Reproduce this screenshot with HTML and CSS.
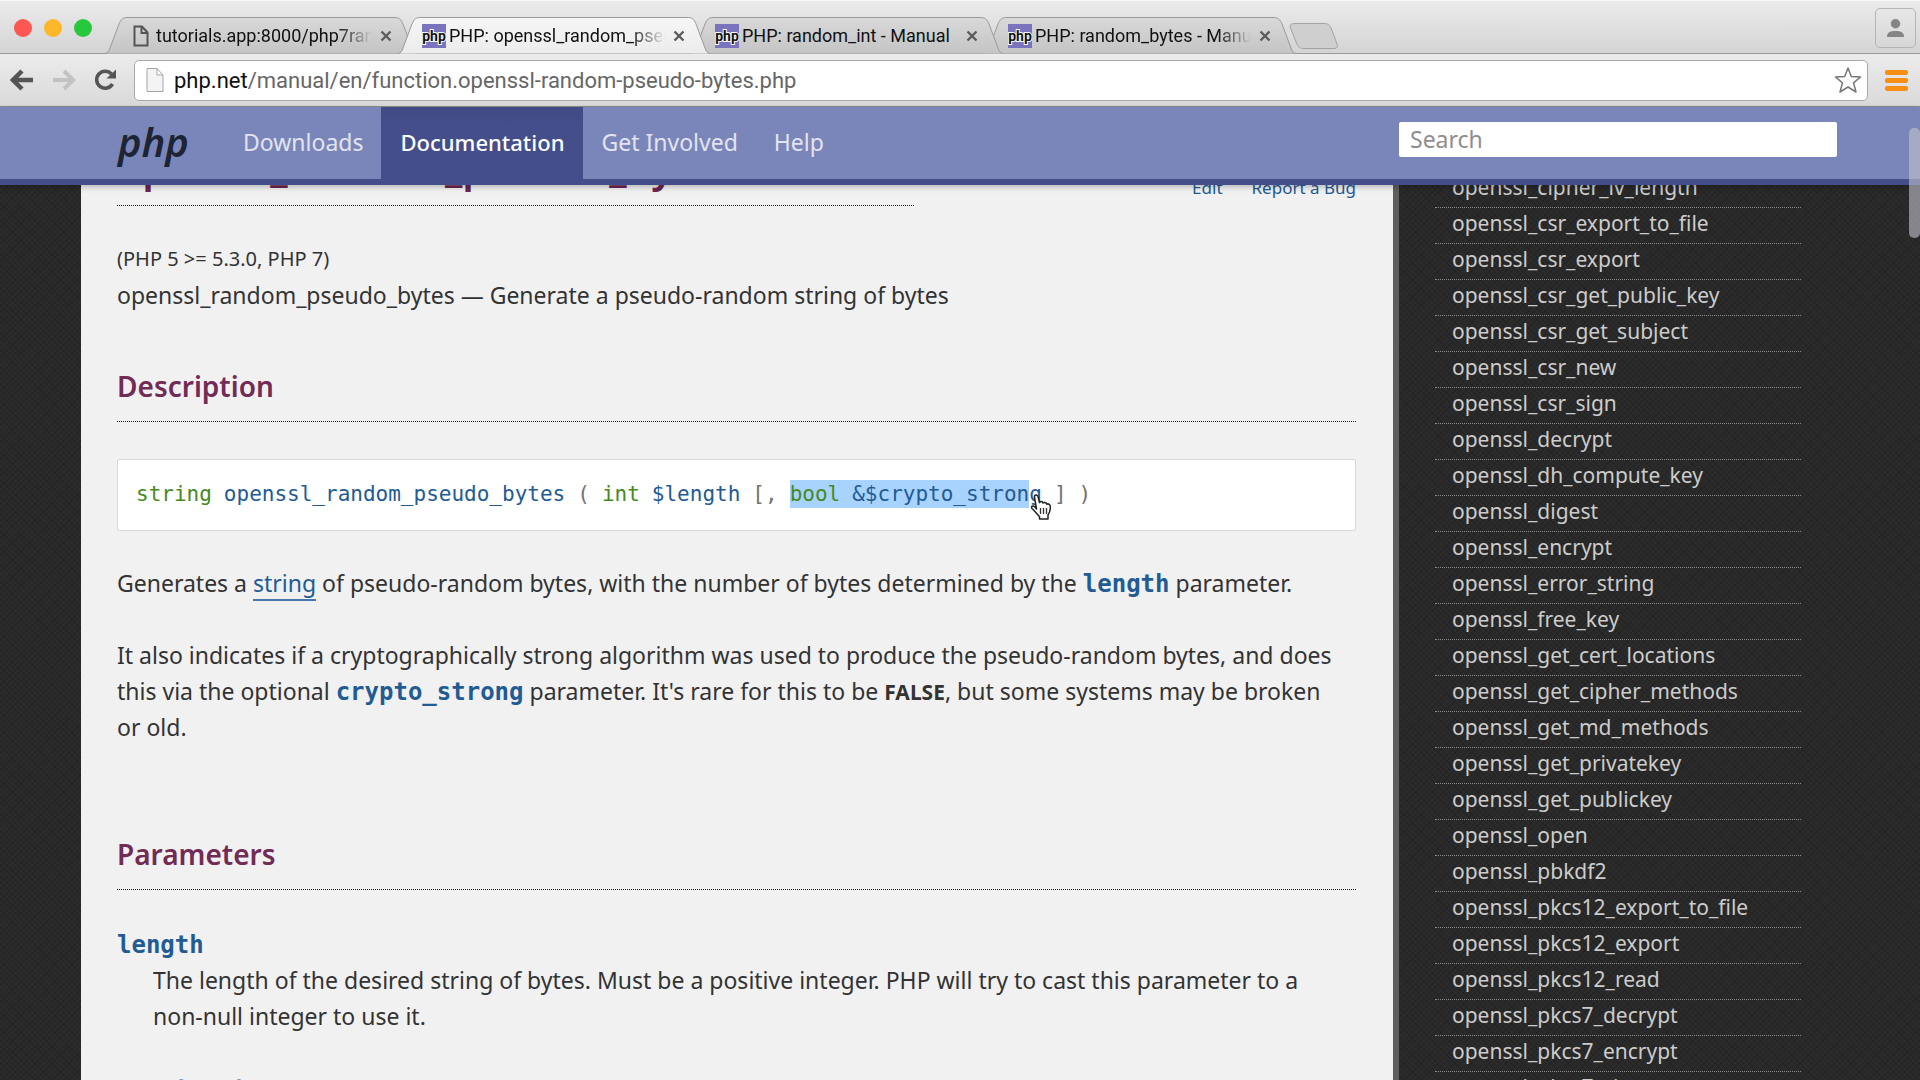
FILE: index.html
```html
<!DOCTYPE html>
<html lang="en">
<head>
    <meta charset="UTF-8">
    <meta name="viewport" content="width=device-width, initial-scale=1.0">
    <title>PHP: openssl_random_pseudo_bytes - Manual</title>
    <link rel="stylesheet" href="styles.css">
</head>
<body>
    <!-- Shared shapes -->
    <svg class="defs" width="0" height="0" aria-hidden="true">
        <defs>
            <linearGradient id="tab-fill" x1="0" y1="0" x2="0" y2="1">
                <stop offset="0" stop-color="#d9d9d9"/>
                <stop offset="1" stop-color="#c4c4c4"/>
            </linearGradient>
            <linearGradient id="tab-fill-active" x1="0" y1="0" x2="0" y2="1">
                <stop offset="0" stop-color="#f6f6f6"/>
                <stop offset="1" stop-color="#ececec"/>
            </linearGradient>
            <symbol id="tab-shape" viewBox="0 0 312 37">
                <path d="M0 36.5 C3 36 4 34 5 31 L14 7 C16 2 18 .5 23 .5 H289 C294 .5 296 2 298 7 L307 31 C308 34 309 36 312 36.5" stroke="#9a9a9a"/>
            </symbol>
            <symbol id="favicon" viewBox="0 0 24 24">
                <rect width="24" height="24" fill="#7a73bd"/>
                <text x="12" y="17" class="favicon-text">php</text>
            </symbol>
            <symbol id="close" viewBox="0 0 12 12">
                <path d="M1.5 1.5 L10.5 10.5 M10.5 1.5 L1.5 10.5" stroke="#5c5c5c" stroke-width="2.4"/>
            </symbol>
        </defs>
    </svg>

    <div class="browser">
        <div class="tab-strip">
            <div class="lights">
                <span class="light red"></span>
                <span class="light yellow"></span>
                <span class="light green"></span>
            </div>
            <div class="tabs">
                <div class="tab">
                    <svg class="tab-bg"><use href="#tab-shape"/></svg>
                    <svg class="tab-icon" viewBox="0 0 24 24"><path d="M5.500 2.500 H13 L18.500 8.500 V21.500 H5.500 Z M12.500 2.500 V9 H18.500" fill="none" stroke="#555" stroke-width="2"/></svg>
                    <span class="tab-title fade">tutorials.app:8000/php7random</span>
                    <button class="tab-close" aria-label="Close tab"><svg><use href="#close"/></svg></button>
                </div>
                <div class="tab active">
                    <svg class="tab-bg"><use href="#tab-shape"/></svg>
                    <svg class="tab-icon"><use href="#favicon"/></svg>
                    <span class="tab-title fade">PHP: openssl_random_pseudo_bytes</span>
                    <button class="tab-close" aria-label="Close tab"><svg><use href="#close"/></svg></button>
                </div>
                <div class="tab">
                    <svg class="tab-bg"><use href="#tab-shape"/></svg>
                    <svg class="tab-icon"><use href="#favicon"/></svg>
                    <span class="tab-title">PHP: random_int - Manual</span>
                    <button class="tab-close" aria-label="Close tab"><svg><use href="#close"/></svg></button>
                </div>
                <div class="tab">
                    <svg class="tab-bg"><use href="#tab-shape"/></svg>
                    <svg class="tab-icon"><use href="#favicon"/></svg>
                    <span class="tab-title fade">PHP: random_bytes - Manual</span>
                    <button class="tab-close" aria-label="Close tab"><svg><use href="#close"/></svg></button>
                </div>
            </div>
            <button class="new-tab" aria-label="New tab">
                <svg viewBox="0 0 50 26"><path d="M6 .5 H35 C39 .5 41 2 42.500 6 L48 21 C49 24 48 25.500 45 25.500 H15 C11 25.500 9 24 7.500 20 L1.500 5 C.5 2 2 .5 6 .5 Z" fill="#cfcfcf" stroke="#a2a2a2"/></svg>
            </button>
            <button class="profile" aria-label="Profile">
                <svg viewBox="0 0 20 20"><ellipse cx="10" cy="5" rx="5" ry="5" fill="#858585"/><path d="M1 19 C1 14 4 12.500 10 12.500 C16 12.500 19 14 19 19 Z" fill="#858585"/></svg>
            </button>
        </div>

        <div class="toolbar">
            <button class="tool" aria-label="Back">
                <svg viewBox="0 0 24 22"><path d="M23 11 H4 M12 2 L3 11 L12 20" fill="none" stroke="#555" stroke-width="4.500"/></svg>
            </button>
            <button class="tool" aria-label="Forward">
                <svg viewBox="0 0 24 22"><path d="M1 11 H20 M12 2 L21 11 L12 20" fill="none" stroke="#c2c2c2" stroke-width="4"/></svg>
            </button>
            <button class="tool" aria-label="Reload">
                <svg viewBox="0 0 24 22"><path d="M18.500 15 A8.500 8.500 0 1 1 17.500 5" fill="none" stroke="#555" stroke-width="3.500"/><path d="M22 .5 V9.500 H12.500 Z" fill="#555"/></svg>
            </button>
            <div class="omnibox">
                <svg class="page-icon" viewBox="0 0 18 24"><path d="M1 .5 H11 L17 7 V23.500 H1 Z M11 .5 V7 H17" fill="#f4f4f4" stroke="#a3a3a3"/></svg>
                <div class="url"><span class="host">php.net</span>/manual/en/function.openssl-random-pseudo-bytes.php</div>
                <button class="star" aria-label="Bookmark this page">
                    <svg viewBox="0 0 28 28"><path d="M14 2 L17.300 10.500 L26.500 11 L19.500 16.800 L22 26 L14 21 L6 26 L8.500 16.800 L1.500 11 L10.700 10.500 Z" fill="#fff" stroke="#777" stroke-width="1.500" stroke-linejoin="round"/></svg>
                </button>
            </div>
            <button class="menu" aria-label="Menu">
                <span></span>
                <span></span>
                <span></span>
            </button>
        </div>
    </div>

    <nav class="navbar">
        <a href="#" class="brand">php</a>
        <ul class="nav-menu">
            <li><a href="#" class="nav-link">Downloads</a></li>
            <li><a href="#" class="nav-link active">Documentation</a></li>
            <li><a href="#" class="nav-link">Get Involved</a></li>
            <li><a href="#" class="nav-link">Help</a></li>
        </ul>
        <input type="search" class="search" placeholder="Search" aria-label="Search">
    </nav>

    <div class="viewport">
        <div class="page">
            <main class="content">
                <div class="title-row">
                    <h1>openssl_random_pseudo_bytes</h1>
                    <div class="page-tools">
                        <a href="#">Edit</a>
                        <a href="#">Report a Bug</a>
                    </div>
                </div>
                <p class="version">(PHP 5 &gt;= 5.3.0, PHP 7)</p>
                <p class="brief">openssl_random_pseudo_bytes — Generate a pseudo-random string of bytes</p>

                <section>
                    <h2>Description</h2>
                    <div class="synopsis">
                        <span class="type">string</span>
                        <span class="name">openssl_random_pseudo_bytes</span>
                        <span>(</span>
                        <span class="type">int</span>
                        <span class="name">$length</span>
                        <span>[,</span>
                        <span class="last-param"><span class="selected"><span class="type">bool</span><span class="name">&amp;$crypto_stron</span></span><span class="name">g</span>
                            <svg class="cursor" viewBox="0 0 24 28"><path d="M7.500 16 L5.500 4.500 C5 1.500 8.500 1 9.200 4 L10.500 9.500 C11.500 8 13.500 8.300 14 10 C15.500 8.800 17.300 9.500 17.700 11.200 C19.500 10.300 21.300 11.500 21.300 13.500 C21.500 18 20.500 20 19 22 V26 H10.500 V23.500 C8 21.500 6 18 3 15.500 C1.500 13.500 4 12 6 14 Z" fill="#fff" stroke="#222" stroke-width="1.500" stroke-linejoin="round"/><path d="M11.500 15 V21 M14.500 15 V21 M17.500 15 V21" stroke="#333" stroke-width="1.300"/></svg>
                        </span>
                        <span>]</span>
                        <span>)</span>
                    </div>
                    <p>Generates a <a href="#" class="text-link">string</a> of pseudo-random bytes, with the number of bytes determined by the <code>length</code> parameter.</p>
                    <p>It also indicates if a cryptographically strong algorithm was used to produce the pseudo-random bytes, and does this via the optional <code>crypto_strong</code> parameter. It's rare for this to be <strong>FALSE</strong>, but some systems may be broken or&nbsp;old.</p>
                </section>

                <section>
                    <h2>Parameters</h2>
                    <dl>
                        <dt><code>length</code></dt>
                        <dd>The length of the desired string of bytes. Must be a positive integer. PHP will try to cast this parameter to a <span class="nowrap">non-null</span> integer to use it.</dd>
                        <dt><code>crypto_strong</code></dt>
                    </dl>
                </section>
            </main>

            <aside class="sidebar">
                <ul>
                    <li><a href="#">openssl_cipher_iv_length</a></li>
                    <li><a href="#">openssl_csr_export_to_file</a></li>
                    <li><a href="#">openssl_csr_export</a></li>
                    <li><a href="#">openssl_csr_get_public_key</a></li>
                    <li><a href="#">openssl_csr_get_subject</a></li>
                    <li><a href="#">openssl_csr_new</a></li>
                    <li><a href="#">openssl_csr_sign</a></li>
                    <li><a href="#">openssl_decrypt</a></li>
                    <li><a href="#">openssl_dh_compute_key</a></li>
                    <li><a href="#">openssl_digest</a></li>
                    <li><a href="#">openssl_encrypt</a></li>
                    <li><a href="#">openssl_error_string</a></li>
                    <li><a href="#">openssl_free_key</a></li>
                    <li><a href="#">openssl_get_cert_locations</a></li>
                    <li><a href="#">openssl_get_cipher_methods</a></li>
                    <li><a href="#">openssl_get_md_methods</a></li>
                    <li><a href="#">openssl_get_privatekey</a></li>
                    <li><a href="#">openssl_get_publickey</a></li>
                    <li><a href="#">openssl_open</a></li>
                    <li><a href="#">openssl_pbkdf2</a></li>
                    <li><a href="#">openssl_pkcs12_export_to_file</a></li>
                    <li><a href="#">openssl_pkcs12_export</a></li>
                    <li><a href="#">openssl_pkcs12_read</a></li>
                    <li><a href="#">openssl_pkcs7_decrypt</a></li>
                    <li><a href="#">openssl_pkcs7_encrypt</a></li>
                    <li><a href="#">openssl_pkcs7_sign</a></li>
                </ul>
            </aside>
        </div>
    </div>
    <div class="scroll-thumb"></div>
</body>
</html>
```
FILE: styles.css
```css
* {
    margin: 0;
    padding: 0;
    box-sizing: border-box;
}

body {
    display: flex;
    flex-direction: column;
    position: relative;
    height: 100vh;
    overflow: hidden;
    font-family: "Noto Sans", sans-serif;
    font-size: 23px;
    line-height: 36px;
    color: #333;
    background: #2b2b2b;
}

a {
    text-decoration: none;
}

ul {
    list-style: none;
}

button {
    border: 0;
    background: none;
}

svg {
    display: block;
}

.defs {
    position: absolute;
}

/* Browser window */
.browser {
    font-family: Roboto, sans-serif;
}

.tab-strip {
    display: flex;
    align-items: flex-end;
    height: 54px;
    padding: 0 4px 0 14px;
    background: linear-gradient(#ebebeb, #d4d4d4);
    border-top: 1px solid #f8f8f8;
    border-bottom: 1px solid #9a9a9a;
}

.lights {
    display: flex;
    gap: 12px;
    width: 91px;
    padding-bottom: 16px;
}

.light {
    width: 18px;
    height: 18px;
    border-radius: 50%;
}

.light.red {
    background: #fc5753;
}

.light.yellow {
    background: #fdb72b;
}

.light.green {
    background: #28c83e;
}

.tabs {
    display: flex;
    padding-right: 12px;
    margin-bottom: -1px;
}

.tab {
    display: flex;
    align-items: center;
    position: relative;
    width: 312px;
    height: 37px;
    margin-right: -19px;
    padding: 0 25px 0 24px;
}

.tab:nth-child(1) {
    z-index: 3;
}

.tab:nth-child(3) {
    z-index: 2;
}

.tab:nth-child(4) {
    z-index: 1;
}

.tab.active {
    z-index: 4;
}

.tab-bg {
    position: absolute;
    top: 0;
    left: 0;
    width: 312px;
    height: 37px;
    fill: url(#tab-fill);
}

.active .tab-bg {
    fill: url(#tab-fill-active);
}

.tab-icon {
    position: relative;
    flex: none;
    width: 24px;
    height: 24px;
    margin-right: 3px;
}

.favicon-text {
    font: bold 14px Roboto, sans-serif;
    text-anchor: middle;
    fill: #111;
    stroke: #fff;
    stroke-width: 2px;
    paint-order: stroke;
}

.tab-title {
    position: relative;
    flex: 1;
    overflow: hidden;
    white-space: nowrap;
    font-size: 18px;
    line-height: 24px;
    color: #111;
}

.fade {
    mask-image: linear-gradient(to right, #000 84%, transparent);
}

.tab-close {
    position: relative;
    margin-left: 8px;
}

.tab-close svg {
    width: 12px;
    height: 12px;
}

.new-tab {
    margin-bottom: 4px;
}

.new-tab svg {
    width: 50px;
    height: 26px;
}

.profile {
    display: flex;
    align-items: center;
    justify-content: center;
    width: 41px;
    height: 40px;
    margin: 0 0 5px auto;
    border: 1px solid #b5b5b5;
    border-radius: 5px;
}

.profile svg {
    width: 19px;
    height: 19px;
}

.toolbar {
    display: flex;
    align-items: center;
    height: 53px;
    padding: 0 12px 0 10px;
    background: linear-gradient(#ececec, #d9d9d9);
    border-bottom: 1px solid #8c8c8c;
}

.tool {
    margin-right: 18px;
}

.tool svg {
    width: 24px;
    height: 22px;
}

.omnibox {
    display: flex;
    align-items: center;
    flex: 1;
    height: 41px;
    margin: 0 17px 0 -2px;
    padding: 0 5px 0 11px;
    background: #fff;
    border: 1px solid #a9a9a9;
    border-radius: 5px;
}

.page-icon {
    width: 18px;
    height: 24px;
    margin-right: 10px;
}

.url {
    flex: 1;
    padding-top: 2px;
    font-size: 22px;
    color: #666;
}

.host {
    color: #111;
}

.star svg {
    width: 28px;
    height: 28px;
}

.menu {
    display: flex;
    flex-direction: column;
    gap: 3px;
}

.menu span {
    width: 23px;
    height: 5px;
    background: #f78f14;
    border-radius: 2px;
}

/* Site header */
.navbar {
    display: flex;
    position: relative;
    z-index: 2;
    flex: none;
    height: 78px;
    padding: 0 83px 0 118px;
    background: #7a86b9;
    border-bottom: 6px solid #444e8b;
    box-shadow: 0 2px 6px rgba(0, 0, 0, 0.25);
}

.brand {
    width: 107px;
    line-height: 70px;
    font-size: 40px;
    font-weight: 600;
    font-style: italic;
    color: #1d2433;
}

.nav-menu {
    display: flex;
}

.nav-link {
    display: block;
    padding: 0 18px;
    line-height: 70px;
    color: #e2e4ef;
}

.nav-link.active {
    height: 72px;
    padding: 0 19px;
    font-size: 22px;
    font-weight: 500;
    color: #fff;
    background: linear-gradient(#404a83, #444e8b 20px);
}

.search {
    width: 438px;
    height: 35px;
    margin: 15px 0 0 auto;
    padding: 0 11px 2px;
    border: 0;
    border-radius: 2px;
    background: #fff;
    font-family: inherit;
    font-size: 23px;
}

.search::placeholder {
    color: #8e8e8e;
}

/* Scrolled page */
.viewport {
    flex: 1;
    overflow: hidden;
    padding-left: 81px;
    background: repeating-linear-gradient(45deg, rgba(0, 0, 0, 0.12) 0 1px, transparent 1px 4px), repeating-linear-gradient(-45deg, rgba(0, 0, 0, 0.12) 0 1px, transparent 1px 4px), #2b2b2b;
}

.page {
    display: flex;
    margin-top: -43px;
}

.content {
    flex: 1;
    padding: 0 37px 0 36px;
    background: #f1f1f1;
}

.title-row {
    display: flex;
    align-items: flex-start;
    justify-content: space-between;
    margin-bottom: 35px;
}

h1 {
    width: 797px;
    padding-bottom: 15px;
    font-size: 41px;
    line-height: 48px;
    font-weight: 600;
    color: #6d2650;
    border-bottom: 1px dotted #3f0a2a;
}

.page-tools {
    display: flex;
    gap: 29px;
    padding-top: 34px;
    font-size: 17px;
    line-height: 24px;
}

.page-tools a,
.text-link {
    color: #225b93;
}

.text-link {
    border-bottom: 2px solid #4477ac;
    line-height: 24px;
}

.version {
    font-size: 20px;
}

h2 {
    margin: 55px 0 37px;
    padding-bottom: 17px;
    font-size: 28px;
    font-weight: 600;
    color: #722b54;
    border-bottom: 1px dotted #3f0a2a;
}

.synopsis {
    display: flex;
    gap: 12px;
    margin-bottom: 34px;
    padding: 16px 18px 18px;
    background: #fff;
    border: 1px solid #d9d9d9;
    border-radius: 2px;
    font-family: "DejaVu Sans Mono", monospace;
    font-size: 21px;
    color: #737373;
}

.type {
    color: #458a1c;
}

.name {
    color: #225b93;
}

.last-param {
    display: flex;
    align-items: center;
    position: relative;
}

.selected {
    display: flex;
    gap: 12px;
    line-height: 28px;
    background: #a8d3ff;
}

.cursor {
    position: absolute;
    top: 17px;
    right: -11px;
    width: 24px;
    height: 28px;
}

section p {
    margin-bottom: 36px;
}

section + section h2 {
    margin-top: 91px;
    margin-bottom: 36px;
}

code {
    font-family: "DejaVu Sans Mono", monospace;
    font-size: 24px;
    line-height: 20px;
    font-weight: bold;
    color: #225b93;
}

strong {
    font-size: 21px;
    line-height: 20px;
}

dt {
    height: 36px;
}

dd {
    margin: 0 0 36px 36px;
}

.nowrap {
    white-space: nowrap;
}

/* Function list */
.sidebar {
    width: 527px;
    padding: 30px 119px 0 36px;
    border-left: 6px solid #5e5e5e;
}

.sidebar li {
    padding: 0 0 5px 17px;
    border-bottom: 1px dotted #8a8a8a;
}

.sidebar a {
    display: block;
    font-size: 21px;
    line-height: 30px;
    color: #ccc;
}

.scroll-thumb {
    position: absolute;
    top: 128px;
    right: 0;
    z-index: 3;
    width: 11px;
    height: 110px;
    border-radius: 5px;
    background: rgba(195, 195, 205, 0.6);
}
```
